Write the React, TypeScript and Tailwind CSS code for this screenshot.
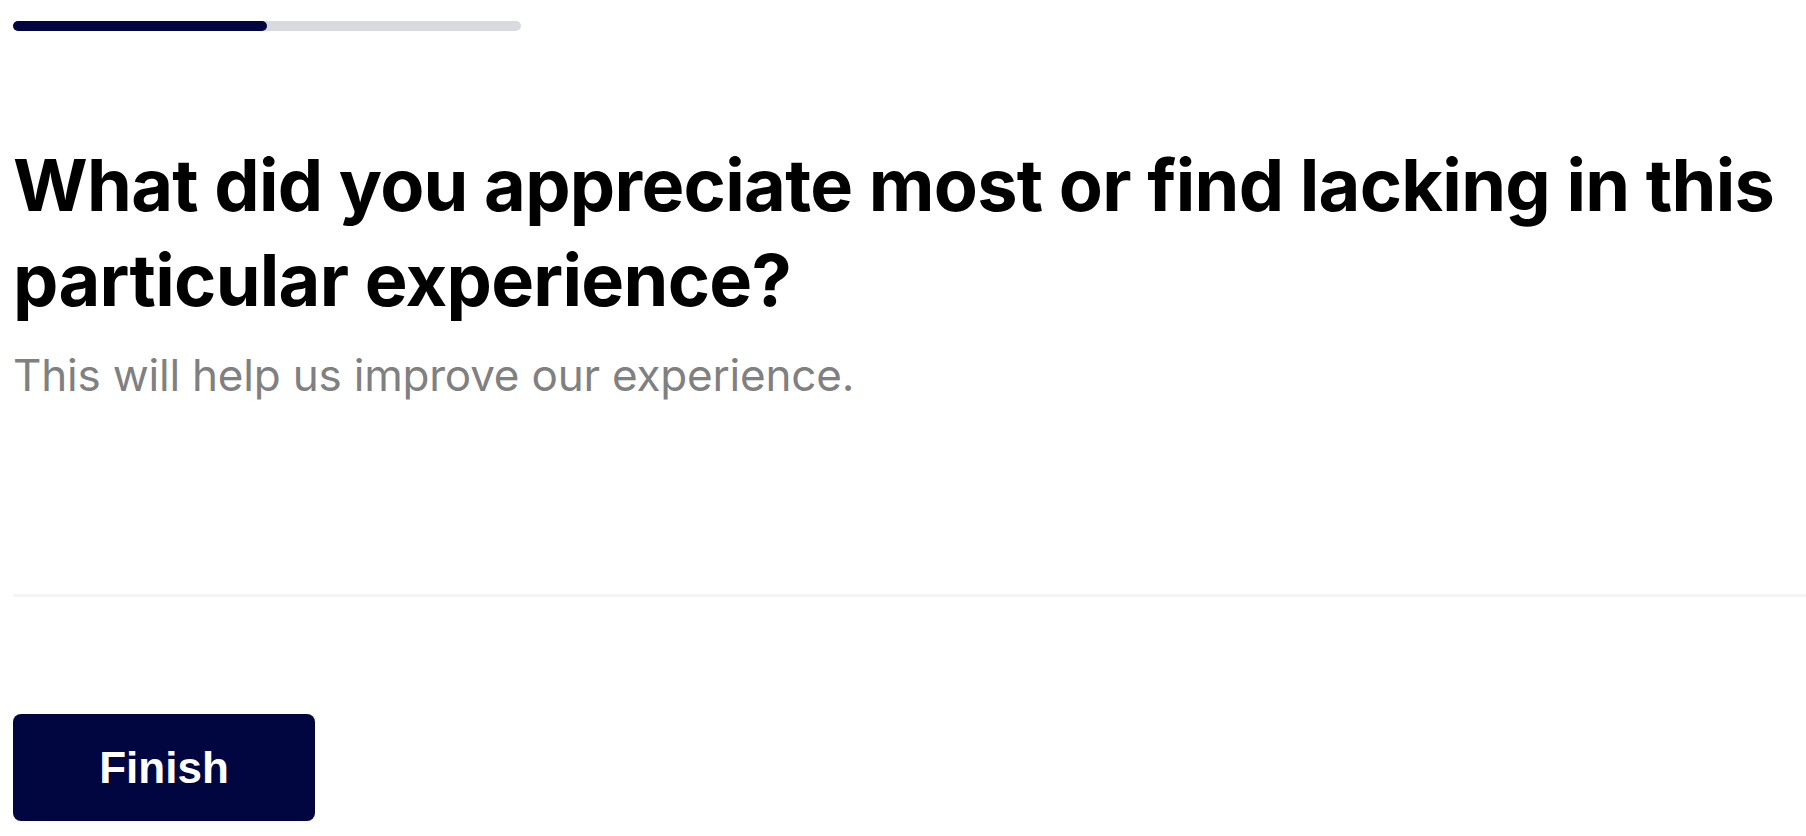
import React from 'react';

const App: React.FC = () => {
  const progress = 50;

  return (
    <div className="min-h-screen w-full bg-white pl-[13px] font-['Inter',sans-serif]">
      <div className="pt-[21px]">
        <div className="h-[10px] w-[508px] rounded-full bg-[#d9dadf]">
          <div className="h-full rounded-full bg-[#010641]" style={{ width: `${progress}%` }} />
        </div>
      </div>

      <h1 className="mt-[106px] pr-[13px] text-[72px] font-bold leading-[95px] tracking-[-0.7px] text-black">
        What did you appreciate most or find lacking in this particular experience?
      </h1>
      <p className="mt-[20px] text-[44px] leading-[56px] tracking-[-0.2px] text-[#808080]">
        This will help us improve our experience.
      </p>

      <div className="mt-[191px] h-[3px] w-full bg-[#f4f4f4]" />

      <button className="mt-[117px] flex h-[107px] w-[302px] items-center justify-center rounded-[8px] bg-[#010641] font-['Liberation_Sans',Arial,sans-serif] text-[44px] font-bold text-white">
        Finish
      </button>
    </div>
  );
};

export default App;
